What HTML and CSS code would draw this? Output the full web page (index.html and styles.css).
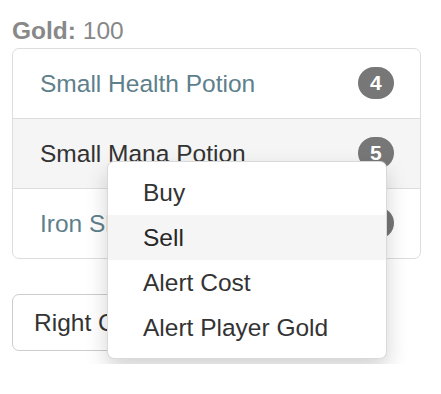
FILE: index.html
```html
<!DOCTYPE html>
<html lang="en">
<head>
    <meta charset="UTF-8">
    <meta name="viewport" content="width=device-width, initial-scale=1.0">
    <title>Shop Context Menu</title>
    <link rel="stylesheet" href="styles.css">
</head>
<body>
    <div class="container">
        <div class="gold"><strong>Gold:</strong> 100</div>
        <ul class="list-group">
            <li class="list-group-item">Small Health Potion <span class="badge">4</span></li>
            <li class="list-group-item hover">Small Mana Potion <span class="badge">5</span></li>
            <li class="list-group-item">Iron Shield <span class="badge">2</span></li>
        </ul>
        <button type="button" class="btn">Right Click Me</button>

        <ul class="dropdown-menu">
            <li><a href="#">Buy</a></li>
            <li><a href="#" class="active">Sell</a></li>
            <li><a href="#">Alert Cost</a></li>
            <li><a href="#">Alert Player Gold</a></li>
        </ul>
    </div>
</body>
</html>
```

FILE: styles.css
```css
/* Bootstrap-like look, scaled up */
body {
    margin: 0;
    font-family: "Liberation Sans", Arial, sans-serif;
    font-size: 24.5px;
    line-height: 35px;
    color: #333;
    background: #fff;
}
.container {
    position: relative;
    padding: 13px 12px;
    width: 409px;
}
.gold {
    color: #888;
}
.gold strong {
    font-weight: bold;
}
.list-group {
    list-style: none;
    margin: 0 0 35px 0;
    padding: 0;
    border: 1px solid #ddd;
    border-radius: 7px;
    overflow: hidden;
}
.list-group-item {
    display: flex;
    justify-content: space-between;
    align-items: flex-start;
    padding: 17px 26px 17px 27px;
    color: #5e7f8c;
    border-top: 1px solid #ddd;
}
.list-group-item:first-child {
    border-top: none;
}
.list-group-item.hover {
    background-color: #f5f5f5;
    color: #333;
}
.badge {
    display: inline-block;
    min-width: 12px;
    padding: 5.25px 12.25px;
    font-size: 21px;
    font-weight: bold;
    line-height: 21px;
    color: #fff;
    text-align: center;
    background-color: #777;
    border-radius: 17.5px;
    margin-top: 1px;
}
.btn {
    display: block;
    font-family: inherit;
    font-size: 24.5px;
    line-height: 35px;
    color: #333;
    background: #fff;
    border: 1px solid #ccc;
    border-radius: 7px;
    padding: 10px 21px;
}
.dropdown-menu {
    position: absolute;
    left: 107px;
    top: 161px;
    width: 278px;
    list-style: none;
    margin: 0;
    padding: 8px 0;
    background: #fff;
    border: 1px solid rgba(0, 0, 0, 0.15);
    border-radius: 7px;
    box-shadow: 0 10px 21px rgba(0, 0, 0, 0.175);
}
.dropdown-menu a {
    display: block;
    padding: 5px 35px;
    color: #333;
    text-decoration: none;
    white-space: nowrap;
}
.dropdown-menu a.active {
    background-color: #f5f5f5;
    color: #262626;
}
```
